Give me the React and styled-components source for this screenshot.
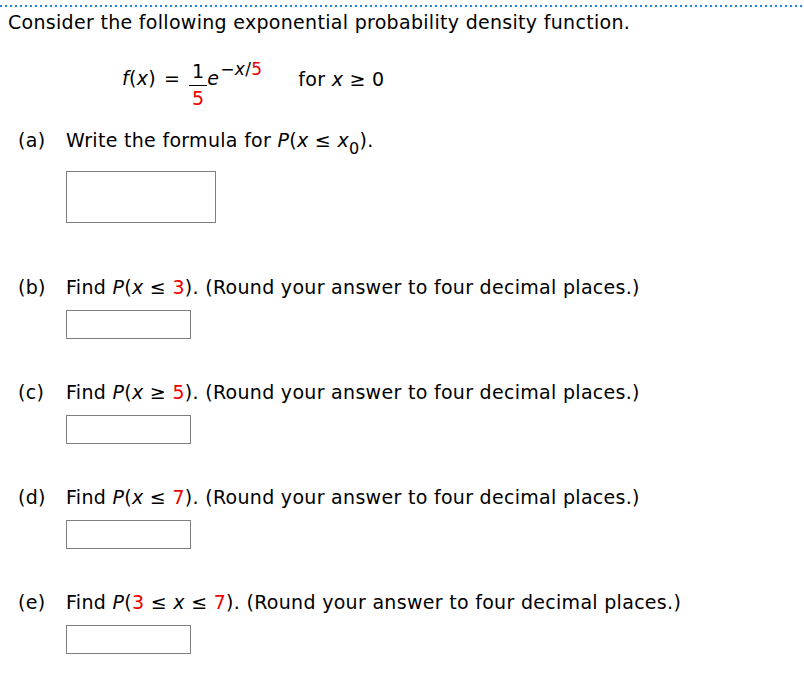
import styled, { createGlobalStyle } from "styled-components";

const GlobalStyle = createGlobalStyle`
  html, body {
    margin: 0;
    padding: 0;
    background: #ffffff;
  }
  body {
    font-family: "DejaVu Sans", Verdana, sans-serif;
    color: #000000;
  }
`;

const Page = styled.div`
  width: 804px;
  height: 674px;
  padding-top: 5px;
  box-sizing: border-box;
  font-size: 19px;
  letter-spacing: 0.3px;
`;

const DotRule = styled.div`
  height: 2px;
  background-image: repeating-linear-gradient(
    to right,
    #1f86e6 0px,
    #1f86e6 2px,
    transparent 2px,
    transparent 5px
  );
`;

const Intro = styled.p`
  margin: 3px 0 0 8px;
  line-height: 24px;
`;

const Formula = styled.div`
  display: flex;
  align-items: center;
  margin: 12px 0 0 122px;
  height: 70px;
`;

const Ital = styled.i`
  font-style: italic;
`;

const Red = styled.span`
  color: #ee0000;
`;

const Term = styled.span`
  margin-bottom: 6px;
`;

const Eq = styled.span`
  margin: 0 9px 6px 8px;
`;

const Frac = styled.span`
  display: inline-flex;
  flex-direction: column;
  align-items: center;
  line-height: 20px;
  margin-top: 6px;
`;

const FracBar = styled.span`
  width: 18px;
  border-top: 1px solid #000;
  margin: 4px 0 2px;
`;

const Exp = styled.span`
  display: inline-flex;
  align-items: flex-start;
  margin-bottom: 6px;
`;

const Sup = styled.span`
  font-size: 17px;
  margin-top: -8px;
  margin-left: 1px;
`;

const ForText = styled.span`
  margin: 0 0 4px 36px;
`;

const Part = styled.section`
  margin-top: ${(p) => p.$gap}px;
`;

const PartLine = styled.div`
  display: flex;
  margin-left: 18px;
  line-height: 24px;
`;

const Label = styled.span`
  width: 48px;
  flex: none;
`;

const Sub = styled.span`
  font-size: 16px;
  position: relative;
  top: 7px;
`;

const AnswerBox = styled.div`
  margin: ${(p) => p.$top}px 0 0 66px;
  width: ${(p) => p.$w}px;
  height: ${(p) => p.$h}px;
  box-sizing: border-box;
  border: 1px solid #808080;
  background: #ffffff;
`;

const parts = [
  {
    label: "(b)",
    body: (
      <>
        Find <Ital>P</Ital>(<Ital>x</Ital> ≤ <Red>3</Red>). (Round your answer to four decimal places.)
      </>
    ),
  },
  {
    label: "(c)",
    body: (
      <>
        Find <Ital>P</Ital>(<Ital>x</Ital> ≥ <Red>5</Red>). (Round your answer to four decimal places.)
      </>
    ),
  },
  {
    label: "(d)",
    body: (
      <>
        Find <Ital>P</Ital>(<Ital>x</Ital> ≤ <Red>7</Red>). (Round your answer to four decimal places.)
      </>
    ),
  },
  {
    label: "(e)",
    body: (
      <>
        Find <Ital>P</Ital>(<Red>3</Red> ≤ <Ital>x</Ital> ≤ <Red>7</Red>). (Round your answer to four decimal places.)
      </>
    ),
  },
];

export default function App() {
  return (
    <Page>
      <GlobalStyle />
      <DotRule />
      <Intro>Consider the following exponential probability density function.</Intro>

      <Formula>
        <Term>
          <Ital>f</Ital>(<Ital>x</Ital>)
        </Term>
        <Eq>=</Eq>
        <Frac>
          <span>1</span>
          <FracBar />
          <Red>5</Red>
        </Frac>
        <Exp>
          <Ital>e</Ital>
          <Sup>
            −<Ital>x</Ital>/<Red>5</Red>
          </Sup>
        </Exp>
        <ForText>
          for <Ital>x</Ital> ≥ 0
        </ForText>
      </Formula>

      <Part $gap={12}>
        <PartLine>
          <Label>(a)</Label>
          <span>
            Write the formula for <Ital>P</Ital>(<Ital>x</Ital> ≤ <Ital>x</Ital>
            <Sub>0</Sub>).
          </span>
        </PartLine>
        <AnswerBox $top={17} $w={150} $h={52} />
      </Part>

      {parts.map((p, i) => (
        <Part key={p.label} $gap={i === 0 ? 52 : 41}>
          <PartLine>
            <Label>{p.label}</Label>
            <span>{p.body}</span>
          </PartLine>
          <AnswerBox $top={11} $w={125} $h={29} />
        </Part>
      ))}
    </Page>
  );
}
